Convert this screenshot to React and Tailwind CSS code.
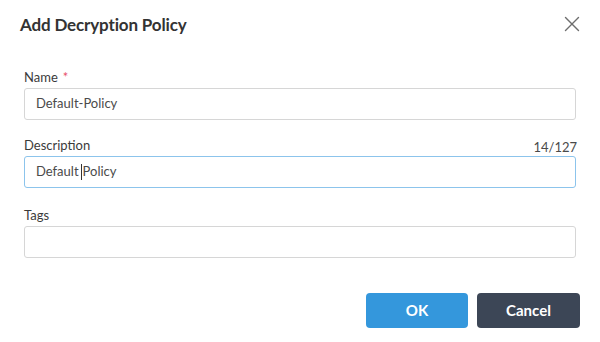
import { X } from 'lucide-react';

const font = { fontFamily: 'Lato, "Open Sans", sans-serif' };

function Field({ label, required, counter, children, className = '' }) {
  return (
    <div className={className}>
      <div className="flex items-end justify-between h-[18px] mb-[2px]">
        <span className="text-[13px] leading-[18px] text-[#3b3b3b]">
          {label}
          {required && <span className="text-[#e8506a] ml-[5px]">*</span>}
        </span>
        {counter && (
          <span className="text-[13px] leading-[18px] text-[#4a4a4a] translate-y-[2px] mr-[-1px]">{counter}</span>
        )}
      </div>
      {children}
    </div>
  );
}

export default function App() {
  return (
    <div className="w-[600px] h-[342px] bg-white relative" style={font}>
      {/* Header */}
      <div className="h-[50px] flex items-center justify-between pl-[20px] pr-[15px]">
        <h2 className="text-[17px] font-bold text-[#333] tracking-[-0.15px]">Add Decryption Policy</h2>
        <X size={26} strokeWidth={1.3} className="text-[#6e6e6e] -translate-y-[1px]" />
      </div>

      {/* Body */}
      <div className="px-[24px] mt-[18px]">
        <Field label="Name" required>
          <div className="h-[32px] border border-[#d6d6d6] rounded-[3px] flex items-center px-[11px] text-[13px] text-[#4a4a4a]">
            Default-Policy
          </div>
        </Field>

        <Field label="Description" counter="14/127" className="mt-[16px]">
          <div className="h-[32px] border border-[#8cc4ec] rounded-[3px] flex items-center px-[11px] text-[13px] text-[#4a4a4a]">
            Default
            <span className="inline-block w-[1px] h-[16px] bg-[#333] ml-[2px] mr-[1px]" />
            Policy
          </div>
        </Field>

        <Field label="Tags" className="mt-[18px]">
          <div className="h-[32px] border border-[#d6d6d6] rounded-[3px]" />
        </Field>
      </div>

      {/* Footer */}
      <div className="flex justify-end gap-[9px] pr-[20px] mt-[35px]">
        <button className="w-[102px] h-[35px] rounded-[4px] bg-[#3497dc] text-white text-[15px] font-bold">
          OK
        </button>
        <button className="w-[103px] h-[35px] rounded-[4px] bg-[#3c4656] text-white text-[15px] font-bold">
          Cancel
        </button>
      </div>
    </div>
  );
}
